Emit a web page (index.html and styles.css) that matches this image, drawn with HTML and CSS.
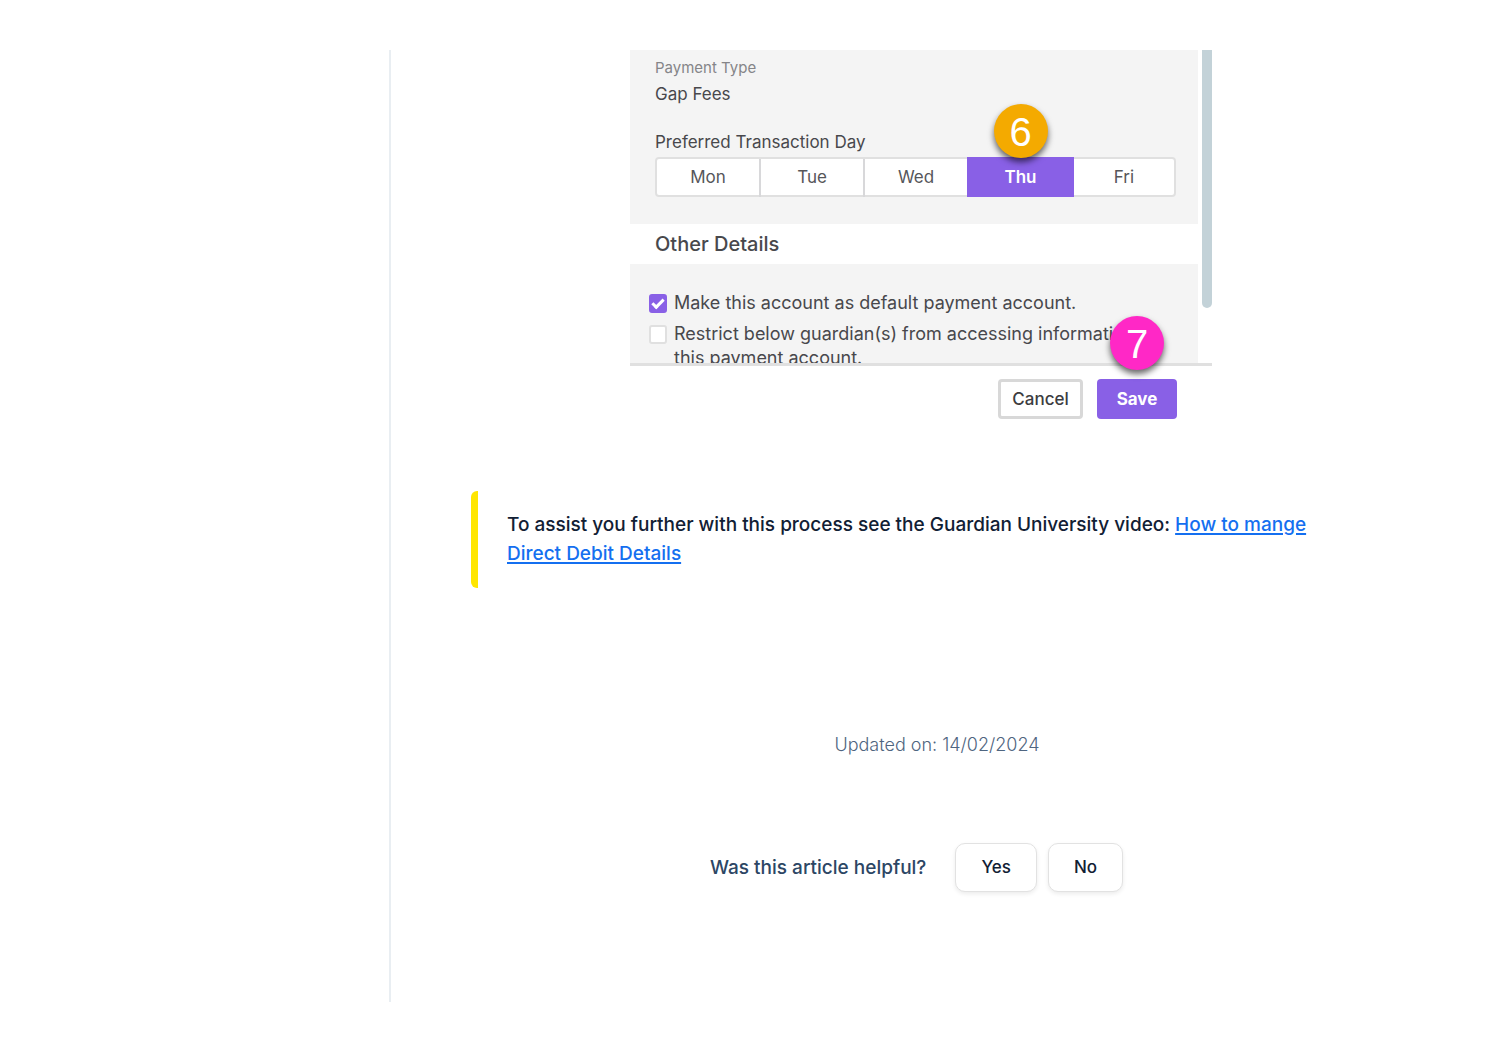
FILE: index.html
```html
<!DOCTYPE html>
<html lang="en">

<head>
  <meta charset="UTF-8" />
  <meta name="viewport" content="width=device-width, initial-scale=1.0" />
  <title>Direct Debit Details</title>
  <link rel="stylesheet" href="styles.css">
</head>

<body>

  <div class="page">
    <!-- Sidebar -->
    <aside class="sidebar"></aside>

    <main class="article">

      <!-- Payment account dialog -->
      <div class="figure">
        <div class="dialog">
          <div class="dialog-scroll">
            <form class="dialog-body">
              <section class="payment">
                <p class="field-label">Payment Type</p>
                <p class="field-value">Gap Fees</p>
                <p class="days-label" id="days-label">Preferred Transaction Day</p>
                <div class="days" role="group" aria-labelledby="days-label">
                  <button type="button" class="day">Mon</button>
                  <button type="button" class="day">Tue</button>
                  <button type="button" class="day">Wed</button>
                  <div class="step-anchor">
                    <button type="button" class="day active">Thu</button>
                    <span class="step step-six">6</span>
                  </div>
                  <button type="button" class="day">Fri</button>
                </div>
              </section>

              <h2 class="section-title">Other Details</h2>

              <section class="options">
                <div class="option">
                  <input type="checkbox" id="default-account" checked>
                  <label for="default-account">Make this account as default payment account.</label>
                </div>
                <div class="option">
                  <input type="checkbox" id="restrict">
                  <label for="restrict">Restrict below guardian(s) from accessing information<br>this payment account.</label>
                </div>
              </section>
            </form>
            <div class="scrollbar">
              <div class="thumb"></div>
            </div>
          </div>

          <div class="dialog-footer">
            <button type="button" class="btn cancel">Cancel</button>
            <div class="step-anchor">
              <button type="button" class="btn save">Save</button>
              <span class="step step-seven">7</span>
            </div>
          </div>
        </div>
      </div>

      <blockquote class="callout">
        To assist you further with this process see the Guardian University video: <a href="#">How to mange Direct Debit Details</a>
      </blockquote>

      <p class="updated">Updated on: 14/02/2024</p>

      <!-- Feedback -->
      <div class="feedback">
        <span class="question">Was this article helpful?</span>
        <div class="answers">
          <button type="button" class="answer">Yes</button>
          <button type="button" class="answer">No</button>
        </div>
      </div>

    </main>
  </div>

</body>

</html>
```
FILE: styles.css
```css
*,
*::after {
  box-sizing: border-box;
}

body {
  font-family: Inter, "Liberation Sans", sans-serif;
  background: #fff;
  color: #112034;
  margin: 0;
  padding: 50px;
}

p,
h2 {
  margin: 0;
}

button {
  font-family: inherit;
  cursor: pointer;
}

.page {
  display: grid;
  grid-template-columns: 339px 1fr;
}

.article {
  border-left: 2px solid #e9eef2;
  padding: 0 47px 110px 80px;
}

/* Dialog */
.figure {
  width: 100%;
  max-width: 614px;
  margin: 0 auto;
}

.dialog {
  max-width: 582px;
  color: #48484c;
  font-size: 17px;
}

.dialog-scroll {
  display: flex;
  justify-content: space-between;
  height: 316px;
  overflow: hidden;
  border-bottom: 3px solid #e0e0e0;
}

.dialog-body {
  width: 568px;
}

.payment,
.options {
  background: #f4f4f4;
}

.payment {
  padding: 6px 22px 27px 25px;
}

.field-label {
  font-size: 15px;
  line-height: 24px;
  color: #858588;
}

.field-value {
  line-height: 28px;
  margin-bottom: 20px;
}

.days-label {
  line-height: 28px;
}

.days {
  display: grid;
  grid-template-columns: 102fr 104fr 104fr 107fr 100fr;
  height: 40px;
  margin-top: 1px;
  border: 2px solid #e0e0e0;
  border-radius: 4px;
  background: #fff;
}

.day {
  width: 100%;
  padding: 0 0 2px;
  font-size: 17px;
  color: #56565a;
  background: none;
  border: 0;
}

.step-anchor {
  position: relative;
}

.day + .day {
  border-left: 2px solid #d8d8da;
}

.day.active {
  height: 40px;
  margin-top: -2px;
  padding: 0;
  font-weight: 600;
  color: #fff;
  background: #8960e6;
}

.section-title {
  padding-left: 25px;
  font-size: 20px;
  font-weight: 500;
  line-height: 40px;
  background: #fff;
}

.options {
  padding: 27px 0 20px 19px;
}

.option {
  display: flex;
  gap: 7px;
  margin-bottom: 7px;
  font-size: 18px;
  line-height: 24px;
  white-space: nowrap;
}

.option input {
  appearance: none;
  flex: none;
  width: 18px;
  height: 19px;
  margin: 3px 0 0;
  border: 2px solid #e0e0e0;
  border-radius: 3px;
  background: #fff;
}

.option input:checked {
  border-color: #8960e6;
  background: #8960e6;
}

.option input:checked::after {
  content: "";
  display: block;
  width: 12px;
  height: 7px;
  margin: 3px 1px;
  border: solid #fff;
  border-width: 0 0 3px 3px;
  transform: rotate(-45deg);
}

.scrollbar {
  width: 10px;
}

.thumb {
  height: 258px;
  border-radius: 0 0 5px 5px;
  background: #c3d2d8;
}

.dialog-footer {
  display: flex;
  justify-content: flex-end;
  gap: 14px;
  padding: 13px 35px 15px;
}

.btn {
  height: 40px;
  padding: 0 0 1px;
  font-size: 17px;
  border-radius: 4px;
}

.cancel {
  width: 85px;
  font-weight: 500;
  color: #3c3c40;
  background: #fff;
  border: 3px solid #d8d8d8;
}

.save {
  width: 80px;
  font-weight: 700;
  color: #fff;
  background: #8960e6;
  border: 0;
}

/* Numbered step markers */
.step {
  position: absolute;
  left: 50%;
  width: 54px;
  height: 54px;
  margin-left: -27px;
  border-radius: 50%;
  box-shadow: 0 4px 6px rgba(0, 0, 0, 0.6);
  font-family: "Liberation Sans", sans-serif;
  font-size: 40px;
  line-height: 56px;
  text-align: center;
  color: #fff;
}

.step-six {
  bottom: calc(100% + 1px);
  background: #f4aa00;
}

.step-seven {
  bottom: calc(100% + 9px);
  background: #ff28c6;
}

/* Callout */
.callout {
  margin: 57px 0 0;
  padding: 19px 60px 20px 29px;
  border-left: 7px solid #ffe600;
  border-radius: 6px;
  font-size: 19px;
  font-weight: 500;
  line-height: 29px;
}

.callout a {
  color: #146ff0;
  text-decoration-thickness: 2px;
  text-underline-offset: 2px;
}

.updated {
  margin-top: 143px;
  font-size: 18px;
  font-weight: 300;
  line-height: 28px;
  text-align: center;
  color: #4f6580;
}

.feedback {
  display: flex;
  justify-content: center;
  align-items: center;
  gap: 29px;
  margin: 84px 41px 0 0;
}

.question {
  font-size: 19px;
  font-weight: 500;
  color: #2c4664;
}

.answers {
  display: flex;
  gap: 11px;
}

.answer {
  height: 49px;
  padding: 0 25px 2px;
  font-size: 17px;
  font-weight: 500;
  color: #112034;
  background: #fff;
  border: 1px solid #e2e2e2;
  border-radius: 10px;
  box-shadow: 0 2px 4px rgba(0, 0, 0, 0.08);
}
```
